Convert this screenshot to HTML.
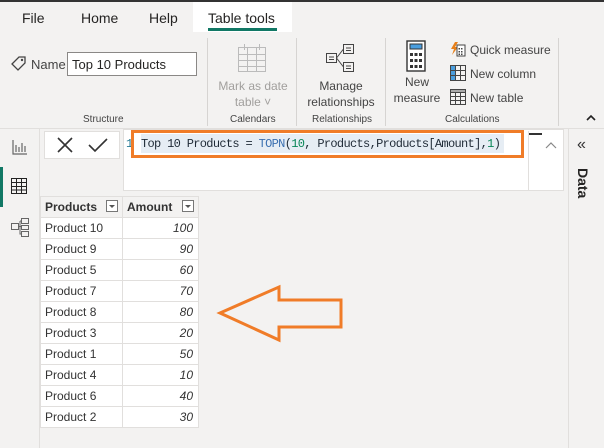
<!DOCTYPE html>
<html><head><meta charset="utf-8"><style>
*{box-sizing:border-box;margin:0;padding:0}
body{width:604px;height:448px;overflow:hidden;background:#f3f2f1;font-family:"Liberation Sans","DejaVu Sans",sans-serif;position:relative;color:#252423}
.a{position:absolute}
.t{font-size:12px;color:#444}
.lab{font-size:10px;color:#444;position:absolute;top:114px}
.sep{position:absolute;top:38px;width:1px;height:88px;background:#d6d4d2}
table{border-collapse:collapse;position:absolute;left:40px;top:196px;background:#fff;font-size:12px}
td{border:1px solid #e1dfdd;height:21px;padding:0 4px;color:#333}
td.n{text-align:right;font-style:italic;padding-right:5px}
th{border:1px solid #e1dfdd;height:21px;text-align:left;padding:0 4px;font-size:12px;color:#333;background:#f3f2f1}
.dd{display:inline-block;width:12px;height:12px;border:1px solid #777;float:right;margin-top:0;position:relative;background:#fff}
.dd:after{content:"";position:absolute;left:2px;top:4px;border:3px solid transparent;border-top:3px solid #555}
</style></head><body>
<div class="a" style="left:0;top:0;width:604px;height:2px;background:#333"></div>
<div class="a" style="left:193px;top:2px;width:99px;height:30px;background:#fff"></div>
<div class="a t" style="left:22px;top:10px;font-size:14px;color:#252423">File</div>
<div class="a t" style="left:81px;top:10px;font-size:14px;color:#252423">Home</div>
<div class="a t" style="left:149px;top:10px;font-size:14px;color:#252423">Help</div>
<div class="a t" style="left:208px;top:10px;font-size:14px;color:#252423">Table tools</div>
<div class="a" style="left:208px;top:28px;width:69px;height:3px;background:#117865"></div>
<svg class="a" style="left:10px;top:55px" width="18" height="16" viewBox="0 0 18 16"><path d="M2 9 L9 2 H15 V8 L8 15 Z" fill="none" stroke="#444" stroke-width="1.3"/><circle cx="12" cy="5" r="1.2" fill="#444"/></svg>
<div class="a t" style="left:31px;top:57px;font-size:13px">Name</div>
<div class="a" style="left:67px;top:52px;width:130px;height:24px;border:1px solid #8a8886;background:#fff;font-size:13px;padding:4px 4px;color:#252423">Top 10 Products</div>
<div class="lab" style="left:83px">Structure</div>
<div class="sep" style="left:207px"></div>
<svg class="a" style="left:237px;top:43px" width="30" height="30" viewBox="0 0 30 30"><g fill="none" stroke="#bbb" stroke-width="1"><rect x="1.5" y="4.5" width="27" height="24"/><path d="M1.5 11.5H28.5M1.5 17.5H28.5M1.5 23.5H28.5M10.5 4.5V28.5M19.5 4.5V28.5M7.5 1V7M22.5 1V7"/></g></svg>
<div class="a" style="left:218px;top:78px;font-size:12px;color:#a19f9d;text-align:center;width:70px;line-height:16px">Mark as date<br>table ˅</div>
<div class="lab" style="left:230px">Calendars</div>
<div class="sep" style="left:296px"></div>
<svg class="a" style="left:325px;top:43px" width="30" height="30" viewBox="0 0 30 30"><g fill="none" stroke="#444" stroke-width="1"><rect x="1.5" y="10.5" width="10" height="9"/><rect x="18.5" y="1.5" width="10" height="9"/><rect x="18.5" y="19.5" width="10" height="9"/><path d="M11.5 15 L18.5 6 M11.5 15 L18.5 24 M4 14h5M4 16.5h5M21 5h5M21 7.5h5M21 23h5M21 25.5h5"/></g></svg>
<div class="a" style="left:305px;top:78px;font-size:12px;color:#444;text-align:center;width:72px;line-height:16px">Manage<br>relationships</div>
<div class="lab" style="left:312px">Relationships</div>
<div class="sep" style="left:385px"></div>
<svg class="a" style="left:406px;top:40px" width="20" height="32" viewBox="0 0 20 32"><rect x="1" y="1" width="18" height="30" fill="#fff" stroke="#333" stroke-width="1.4"/><rect x="4" y="4" width="12" height="5" fill="#4a9ede" stroke="#333"/><g fill="#333"><rect x="4" y="13" width="3" height="3"/><rect x="8.5" y="13" width="3" height="3"/><rect x="13" y="13" width="3" height="3"/><rect x="4" y="19" width="3" height="3"/><rect x="8.5" y="19" width="3" height="3"/><rect x="13" y="19" width="3" height="3"/><rect x="4" y="25" width="3" height="3"/><rect x="8.5" y="25" width="3" height="3"/><rect x="13" y="25" width="3" height="3"/></g></svg>
<div class="a" style="left:393px;top:74px;font-size:12px;color:#444;text-align:center;width:48px;line-height:16px">New<br>measure</div>
<svg class="a" style="left:450px;top:41px" width="16" height="16" viewBox="0 0 16 16"><path d="M5 1 L1 8 H4 L2 14 L8 6 H5 L8 1Z" fill="#e8801a"/><rect x="7" y="4" width="8" height="11" fill="#fff" stroke="#444"/><g fill="#444"><rect x="8.5" y="7" width="1.5" height="1.5"/><rect x="11" y="7" width="1.5" height="1.5"/><rect x="8.5" y="10" width="1.5" height="1.5"/><rect x="11" y="10" width="1.5" height="1.5"/><rect x="8.5" y="12.5" width="1.5" height="1.5"/><rect x="11" y="12.5" width="1.5" height="1.5"/></g></svg>
<div class="a t" style="left:470px;top:43px">Quick measure</div>
<svg class="a" style="left:450px;top:65px" width="16" height="16" viewBox="0 0 16 16"><rect x="0.5" y="0.5" width="5" height="15" fill="#4a9ede"/><rect x="0.5" y="0.5" width="15" height="15" fill="none" stroke="#444"/><path d="M5.5 0.5V15.5M10.5 0.5V15.5M0.5 5.5H15.5M0.5 10.5H15.5" stroke="#444"/></svg>
<div class="a t" style="left:470px;top:67px">New column</div>
<svg class="a" style="left:450px;top:89px" width="16" height="16" viewBox="0 0 16 16"><rect x="0.5" y="0.5" width="15" height="3" fill="#aaa"/><rect x="0.5" y="0.5" width="15" height="15" fill="none" stroke="#444"/><path d="M5.5 3.5V15.5M10.5 3.5V15.5M0.5 3.5H15.5M0.5 7.5H15.5M0.5 11.5H15.5" stroke="#444"/></svg>
<div class="a t" style="left:470px;top:91px">New table</div>
<div class="lab" style="left:445px">Calculations</div>
<div class="sep" style="left:558px"></div>
<svg class="a" style="left:586px;top:114px" width="10" height="7" viewBox="0 0 10 7"><path d="M1 6L5 2L9 6" fill="none" stroke="#222" stroke-width="1.6"/></svg>
<div class="a" style="left:0;top:128px;width:604px;height:1px;background:#e1dfdd"></div>
<div class="a" style="left:39px;top:129px;width:1px;height:319px;background:#e1dfdd"></div>
<div class="a" style="left:0;top:167px;width:3px;height:40px;background:#117865"></div>
<svg class="a" style="left:12px;top:139px" width="16" height="16" viewBox="0 0 16 16"><path d="M1 1V15H15M4 13V6M7 13V8M10 13V4M13 13V7" fill="none" stroke="#666" stroke-width="1.2"/></svg>
<svg class="a" style="left:11px;top:178px" width="16" height="16" viewBox="0 0 16 16"><rect x="0.5" y="0.5" width="15" height="15" fill="none" stroke="#222"/><path d="M0.5 4.5H15.5M0.5 8.5H15.5M0.5 12H15.5M5.5 0.5V15.5M10.5 0.5V15.5" stroke="#222"/></svg>
<svg class="a" style="left:10px;top:217px" width="20" height="20" viewBox="0 0 20 20"><g fill="none" stroke="#666"><rect x="1.5" y="6.5" width="7" height="6"/><rect x="11.5" y="1.5" width="7" height="5"/><rect x="11.5" y="8.5" width="7" height="4"/><rect x="11.5" y="14.5" width="7" height="5"/><path d="M8.5 9.5H11.5M10 4V17H11.5M10 4H11.5"/></g></svg>
<div class="a" style="left:44px;top:131px;width:76px;height:28px;background:#fff;border:1px solid #e1dfdd"></div>
<svg class="a" style="left:56px;top:137px" width="54" height="16" viewBox="0 0 54 16"><path d="M2 1L16 15M16 1L2 15" stroke="#333" stroke-width="1.6"/><path d="M33 8L39 14L51 2" fill="none" stroke="#333" stroke-width="1.6"/></svg>
<div class="a" style="left:123px;top:129px;width:441px;height:62px;background:#fff;border:1px solid #e1dfdd"></div>
<div class="a" style="left:528px;top:131px;width:1px;height:59px;background:#e1dfdd"></div>
<div class="a" style="left:529px;top:133px;width:13px;height:2px;background:#333"></div>
<svg class="a" style="left:545px;top:141px" width="12" height="8" viewBox="0 0 12 8"><path d="M1 7L6 2L11 7" fill="none" stroke="#888" stroke-width="1.2"/></svg>
<div class="a" style="left:126px;top:137px;font-family:'Liberation Mono',monospace;font-size:12px;color:#237893">1</div>
<div class="a" style="left:141px;top:134px;width:363px;height:19px;background:#e6edf4"></div>
<div class="a" style="left:141px;top:137px;font-family:'Liberation Mono',monospace;font-size:12px;color:#1f2a36;white-space:pre;letter-spacing:-0.67px">Top 10 Products = <span style="color:#3a6fb0">TOPN</span>(<span style="color:#098658">10</span>, Products,Products[Amount],<span style="color:#098658">1</span>)</div>
<div class="a" style="left:131px;top:130px;width:393px;height:28px;border:3px solid #f07c28"></div>
<div class="a" style="left:568px;top:129px;width:1px;height:319px;background:#e1dfdd"></div>
<div class="a" style="left:577px;top:136px;font-size:16px;color:#333">«</div>
<div class="a" style="left:575px;top:168px;font-size:14px;font-weight:bold;color:#252423;writing-mode:vertical-rl">Data</div>
<table>
<tr><th style="width:82px"><b>Products</b> <span class="dd"></span></th><th style="width:76px"><b>Amount</b> <span class="dd"></span></th></tr>
<tr><td>Product 10</td><td class="n">100</td></tr>
<tr><td>Product 9</td><td class="n">90</td></tr>
<tr><td>Product 5</td><td class="n">60</td></tr>
<tr><td>Product 7</td><td class="n">70</td></tr>
<tr><td>Product 8</td><td class="n">80</td></tr>
<tr><td>Product 3</td><td class="n">20</td></tr>
<tr><td>Product 1</td><td class="n">50</td></tr>
<tr><td>Product 4</td><td class="n">10</td></tr>
<tr><td>Product 6</td><td class="n">40</td></tr>
<tr><td>Product 2</td><td class="n">30</td></tr>
</table>
<svg class="a" style="left:0;top:0" width="604" height="448"><path d="M220 313 L279 287 V300 H341 V327 H279 V340 Z" fill="none" stroke="#f07c28" stroke-width="3" stroke-linejoin="miter"/></svg>
</body></html>
